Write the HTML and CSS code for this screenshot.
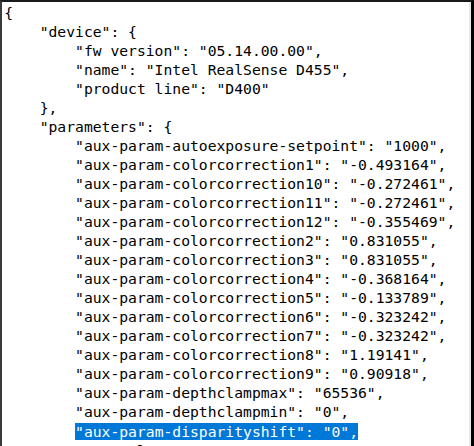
FILE: index.html
```html
<!DOCTYPE html>
<html>
<head>
<meta charset="utf-8">
<link rel="stylesheet" href="styles.css">
</head>
<body>
<div class="frame">
<div class="code">
<div class="ln">{</div>
<div class="ln">    "device": {</div>
<div class="ln">        "fw version": "05.14.00.00",</div>
<div class="ln">        "name": "Intel RealSense D455",</div>
<div class="ln">        "product line": "D400"</div>
<div class="ln">    },</div>
<div class="ln">    "parameters": {</div>
<div class="ln">        "aux-param-autoexposure-setpoint": "1000",</div>
<div class="ln">        "aux-param-colorcorrection1": "-0.493164",</div>
<div class="ln">        "aux-param-colorcorrection10": "-0.272461",</div>
<div class="ln">        "aux-param-colorcorrection11": "-0.272461",</div>
<div class="ln">        "aux-param-colorcorrection12": "-0.355469",</div>
<div class="ln">        "aux-param-colorcorrection2": "0.831055",</div>
<div class="ln">        "aux-param-colorcorrection3": "0.831055",</div>
<div class="ln">        "aux-param-colorcorrection4": "-0.368164",</div>
<div class="ln">        "aux-param-colorcorrection5": "-0.133789",</div>
<div class="ln">        "aux-param-colorcorrection6": "-0.323242",</div>
<div class="ln">        "aux-param-colorcorrection7": "-0.323242",</div>
<div class="ln">        "aux-param-colorcorrection8": "1.19141",</div>
<div class="ln">        "aux-param-colorcorrection9": "0.90918",</div>
<div class="ln">        "aux-param-depthclampmax": "65536",</div>
<div class="ln">        "aux-param-depthclampmin": "0",</div>
<div class="ln">        <span class="sel">"aux-param-disparityshift": "0",</span></div>
<div class="ln">        "controls-autoexposure-auto": "True",</div>
<div class="ln">        "controls-autoexposure-manual": "8500",</div>
</div>
</div>
</body>
</html>
```
FILE: styles.css
```css
html, body {
  margin: 0;
  padding: 0;
  background: #fff;
}
.frame {
  width: 474px;
  height: 446px;
  box-sizing: border-box;
  border-top: 2px solid #1a1a1a;
  border-left: 2px solid #3a3a3a;
  border-right: 3px solid #000;
  overflow: hidden;
  box-shadow: inset -2px 0 0 #e8e8e8;
}
.code {
  padding: 0.5px 0 0 2.3px;
  font-family: "DejaVu Sans Mono", monospace;
  font-size: 14.7px;
  line-height: 19.05px;
  color: #000;
}
.ln {
  white-space: pre;
}
.sel {
  background: #0078d7;
  color: #fff;
}
```
